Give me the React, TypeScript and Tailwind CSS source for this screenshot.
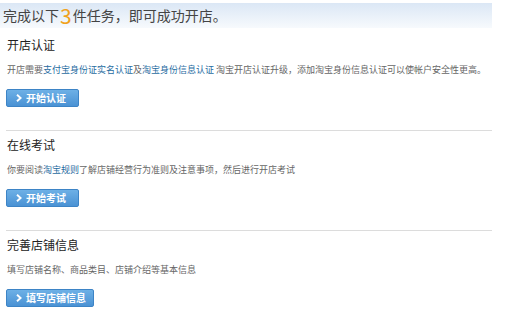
import { ReactNode } from 'react';

const font = { fontFamily: '"Noto Sans CJK SC", "Noto Sans", sans-serif' };

function Chevron() {
  return (
    <svg width="6" height="8" viewBox="0 0 6 8" className="mr-[4px]">
      <path d="M1 0.8 L4.6 4 L1 7.2" fill="none" stroke="#fff" strokeWidth="1.9" />
    </svg>
  );
}

function BlueButton({ label, width }: { label: string; width: string }) {
  return (
    <button
      className={`ml-[6px] flex h-[18px] ${width} items-center rounded-[2px] border border-[#3d84c6] bg-gradient-to-b from-[#6db0e6] to-[#4a92d4] pl-[9px] text-[10px] font-bold leading-none text-white`}
    >
      <Chevron />
      {label}
    </button>
  );
}

function Section({
  title,
  children,
  button,
  first,
}: {
  title: string;
  children: ReactNode;
  button: ReactNode;
  first?: boolean;
}) {
  return (
    <div className={first ? 'pt-[10px]' : 'mx-[6px] border-t border-[#dcdcdc] pt-[7px]'}>
      <h3 className={`${first ? 'pl-[7px]' : 'pl-px'} text-[12px] leading-[14px] text-[#222]`}>{title}</h3>
      <p className={`${first ? 'pl-[7px]' : 'pl-px'} mt-[12px] text-[9px] leading-[12px] text-[#666]`}>{children}</p>
      <div className={`mt-[13px] ${first ? '' : '-ml-[6px]'}`}>{button}</div>
    </div>
  );
}

export default function App() {
  const link = 'text-[#1f6c9f]';
  return (
    <div className="h-[325px] w-[521px] bg-white" style={font}>
      <div className="mt-[3px] flex h-[25px] w-[492px] items-center bg-gradient-to-b from-[#dbe7f5] to-[#f7fafd] pl-[3px] text-[14px] text-[#444]">
        完成以下<span className="mx-px text-[21px] leading-none text-[#f0a21c]">3</span>件任务，即可成功开店。
      </div>

      <div className="w-[498px]">
        <Section first title="开店认证" button={<BlueButton label="开始认证" width="w-[73px]" />}>
          开店需要<span className={link}>支付宝身份证实名认证</span>及<span className={link}>淘宝身份信息认证</span> 淘宝开店认证升级，添加淘宝身份信息认证可以使帐户安全性更高。
        </Section>

        <div className="mt-[23px]">
          <Section title="在线考试" button={<BlueButton label="开始考试" width="w-[73px]" />}>
            你要阅读<span className={link}>淘宝规则</span>了解店铺经营行为准则及注意事项，然后进行开店考试
          </Section>
        </div>

        <div className="mt-[23px]">
          <Section title="完善店铺信息" button={<BlueButton label="填写店铺信息" width="w-[88px]" />}>
            填写店铺名称、商品类目、店铺介绍等基本信息
          </Section>
        </div>
      </div>
    </div>
  );
}
